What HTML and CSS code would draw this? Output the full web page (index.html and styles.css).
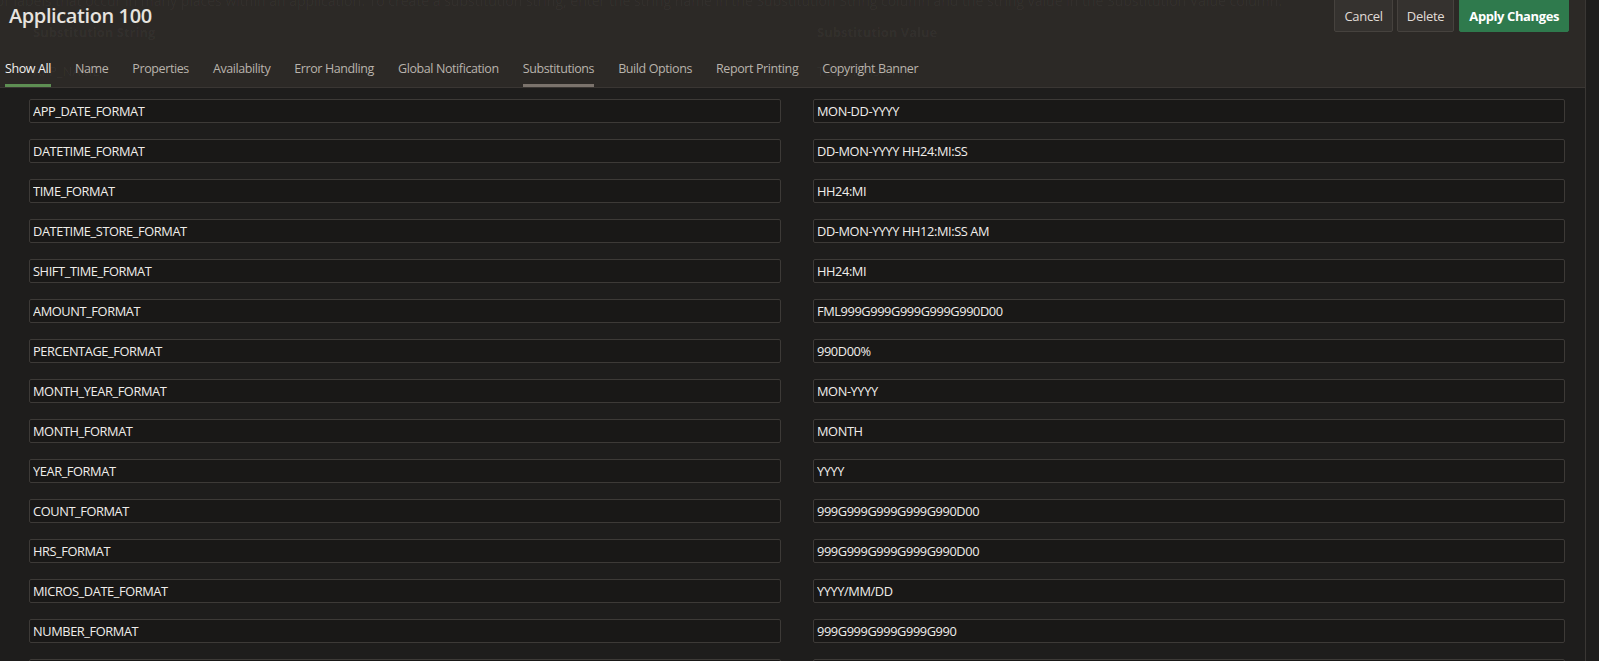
FILE: index.html
```html
<!DOCTYPE html>
<html lang="en">
<head>
  <meta charset="UTF-8">
  <meta name="viewport" content="width=device-width, initial-scale=1.0">
  <title>Application 100 - Substitutions</title>
  <link rel="stylesheet" href="styles.css">
</head>
<body>
  <div class="page">
    <div class="header">
      <!-- scrolled content showing faintly behind the sticky header -->
      <div class="ghost">
        <div class="ghost-desc">ine the static substitution strings for phrases or labels that occur in many places within an application. To create a substitution string, enter the string name in the Substitution String column and the string value in the Substitution Value column.</div>
        <div class="ghost-head ghost-left">Substitution String</div>
        <div class="ghost-head ghost-right">Substitution Value</div>
        <div class="ghost-cell ghost-left ghost-row">APP_NAME</div>
        <div class="ghost-cell ghost-right ghost-row">Test Transform</div>
      </div>

      <div class="title-bar">
        <h1 class="title">Application 100</h1>
        <div class="actions">
          <button class="btn">Cancel</button>
          <button class="btn">Delete</button>
          <button class="btn btn-primary">Apply Changes</button>
        </div>
      </div>

      <div class="tabs">
        <a class="tab active">Show All</a>
        <a class="tab">Name</a>
        <a class="tab">Properties</a>
        <a class="tab">Availability</a>
        <a class="tab">Error Handling</a>
        <a class="tab">Global Notification</a>
        <a class="tab current">Substitutions</a>
        <a class="tab">Build Options</a>
        <a class="tab">Report Printing</a>
        <a class="tab">Copyright Banner</a>
      </div>
    </div>

    <div class="content">
      <div class="grid" id="grid"></div>
    </div>
  </div>

  <script>
    const substitutions = [
      ['APP_DATE_FORMAT', 'MON-DD-YYYY'],
      ['DATETIME_FORMAT', 'DD-MON-YYYY HH24:MI:SS'],
      ['TIME_FORMAT', 'HH24:MI'],
      ['DATETIME_STORE_FORMAT', 'DD-MON-YYYY HH12:MI:SS AM'],
      ['SHIFT_TIME_FORMAT', 'HH24:MI'],
      ['AMOUNT_FORMAT', 'FML999G999G999G999G990D00'],
      ['PERCENTAGE_FORMAT', '990D00%'],
      ['MONTH_YEAR_FORMAT', 'MON-YYYY'],
      ['MONTH_FORMAT', 'MONTH'],
      ['YEAR_FORMAT', 'YYYY'],
      ['COUNT_FORMAT', '999G999G999G999G990D00'],
      ['HRS_FORMAT', '999G999G999G999G990D00'],
      ['MICROS_DATE_FORMAT', 'YYYY/MM/DD'],
      ['NUMBER_FORMAT', '999G999G999G999G990'],
      ['', '']
    ];

    const grid = document.getElementById('grid');
    substitutions.forEach(function (row) {
      row.forEach(function (value) {
        const input = document.createElement('input');
        input.className = 'field';
        input.type = 'text';
        input.value = value;
        grid.appendChild(input);
      });
    });
  </script>
</body>
</html>
```

FILE: styles.css
```css
html, body {
  margin: 0;
  height: 100%;
  overflow: hidden;
}

body {
  background-color: #1e1d1c;
  font-family: "Open Sans", "Noto Sans", Arial, sans-serif;
  color: #e8e6e3;
}

.page {
  border-right: 1px solid #3a3734;
  width: 1585px;
  height: 100%;
}

.header {
  position: relative;
  height: 87px;
  background-color: #2c2926;
  border-bottom: 1px solid #3a3633;
  display: flex;
  flex-direction: column;
  justify-content: space-between;
  overflow: hidden;
}

.ghost {
  position: absolute;
  inset: 0;
  color: rgba(255, 255, 255, 0.045);
  font-size: 13px;
  pointer-events: none;
}

.ghost-desc {
  position: absolute;
  top: -9px;
  right: 303px;
  white-space: nowrap;
  font-size: 14px;
}

.ghost-head {
  position: absolute;
  top: 23px;
  font-weight: 700;
}

.ghost-row {
  position: absolute;
  top: 62px;
}

.ghost-left {
  left: 33px;
}

.ghost-right {
  left: 817px;
}

.title-bar {
  position: relative;
  display: flex;
  justify-content: space-between;
  align-items: flex-start;
  padding-left: 9px;
  padding-right: 16px;
}

.title {
  margin: 0;
  padding-top: 2px;
  font-size: 20px;
  line-height: 28px;
  font-weight: 600;
  color: #e6e3df;
  letter-spacing: -0.4px;
}

.actions {
  display: flex;
  gap: 4px;
  margin-top: -2px;
}

.btn {
  font-family: inherit;
  font-size: 13px;
  height: 34px;
  padding: 2px 9px 0;
  border: 1px solid #46423e;
  border-radius: 2px;
  background-color: #35322f;
  color: #e0dcd7;
  letter-spacing: -0.3px;
  cursor: pointer;
}

.btn-primary {
  margin-left: 1px;
  background-color: #2f7a4d;
  border-color: #2f7a4d;
  color: #ffffff;
  font-weight: 700;
  padding: 2px 9px 0;
  letter-spacing: -0.4px;
}

.tabs {
  position: relative;
  display: flex;
  gap: 24px;
  padding-left: 5px;
}

.tab {
  font-size: 12.5px;
  line-height: 18px;
  color: #b9b3ac;
  padding-bottom: 6px;
  border-bottom: 3px solid transparent;
  letter-spacing: -0.4px;
  cursor: pointer;
}

.tab.active {
  color: #f2f0ed;
  border-bottom-color: #5e8f53;
}

.tab.current {
  border-bottom-color: #7b736c;
}

.content {
  padding: 11px 0 0 29px;
}

.grid {
  display: grid;
  grid-template-columns: 752px 752px;
  column-gap: 32px;
  row-gap: 16px;
}

.field {
  box-sizing: border-box;
  height: 24px;
  margin: 0;
  padding: 0 3px;
  font-family: inherit;
  font-size: 12.8px;
  color: #f0eeeb;
  background-color: #191817;
  border: 1px solid #3d3a37;
  border-radius: 2px;
  outline: none;
  letter-spacing: -0.4px;
}
```
